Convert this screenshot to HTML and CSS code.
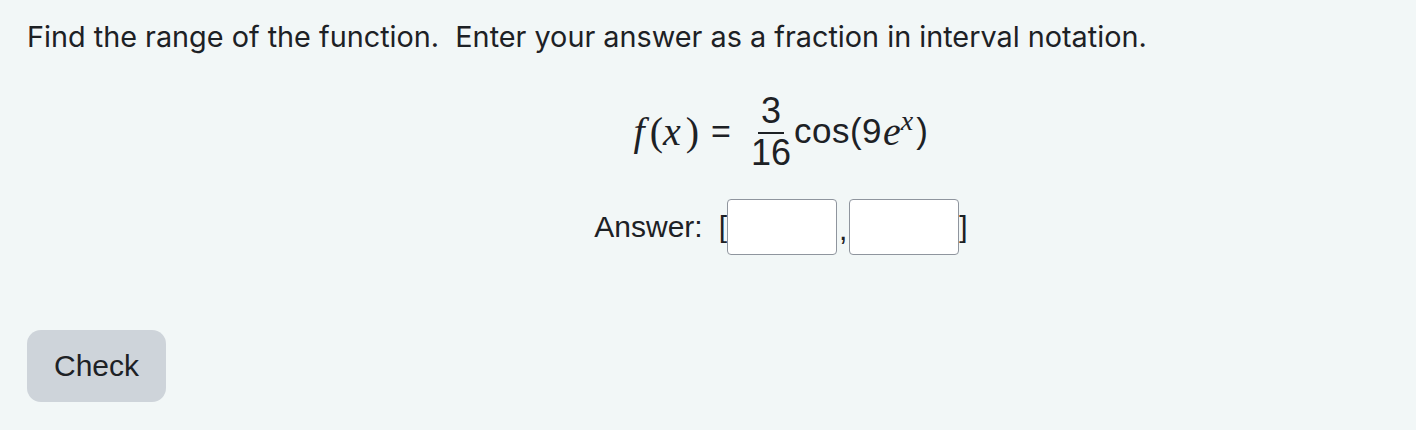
FILE: index.html
```html
<!DOCTYPE html>
<html lang="en">
<head>
  <meta charset="UTF-8" />
  <title>Range of a function</title>
  <link rel="stylesheet" href="styles.css">
</head>
<body>

  <div class="question">
    <p class="prompt">Find the range of the function.&nbsp; Enter your answer as a fraction in interval notation.</p>

    <div class="centered formula">
      <span class="mi">f</span><span class="mo">(</span><span class="mi">x</span><span class="mo">)</span>
      <span class="eq">=</span>
      <span class="frac">
        <span class="num">3</span>
        <span class="den">16</span>
      </span>
      <span class="sans">cos(9</span><span class="mi e">e</span><sup class="mi">x</sup><span class="sans">)</span>
    </div>

    <div class="centered answer">
      <span class="label">Answer:</span>
      <span class="bracket">[</span><input class="box" type="text"><span class="comma">,</span><input class="box" type="text"><span class="bracket">]</span>
    </div>

    <button class="check">Check</button>
  </div>

</body>
</html>
```

FILE: styles.css
```css
body {
  margin: 0;
  background: #f2f7f7;
  color: #1d2125;
  font-family: "Liberation Sans", Arial, sans-serif;
}

.question {
  padding: 16px 27px;
}

.prompt {
  margin: 0;
  font-family: Inter, "Liberation Sans", sans-serif;
  font-size: 28.8px;
  line-height: 42px;
}

.centered {
  margin-left: 146px;
  display: flex;
  justify-content: center;
  align-items: center;
}

.formula {
  margin-top: 31px;
  font-size: 35px;
  height: 84px;
}

.sans {
  letter-spacing: 0.5px;
}

.mi, .mo {
  font-family: "Liberation Serif", "Times New Roman", serif;
  font-size: 40px;
}

.mi {
  font-style: italic;
}

.mi + .mo {
  margin-left: 5px;
}

.eq {
  margin: 0 20px 0 12px;
  font-size: 34px;
}

.frac {
  display: inline-flex;
  flex-direction: column;
  align-items: center;
  margin-right: 3px;
  font-size: 36px;
}

.num {
  line-height: 42px;
  padding: 0 3px;
  border-bottom: 2px solid #1d2125;
}

.den {
  line-height: 38px;
}

.e {
  margin-left: 1px;
}

sup.mi {
  font-size: 28px;
  position: relative;
  top: -10px;
  margin-right: 3px;
}

.answer {
  margin-top: 26px;
  font-size: 30px;
}

.label {
  margin-right: 16px;
}

.bracket {
  font-size: 30px;
}

.box {
  width: 110px;
  height: 56px;
  box-sizing: border-box;
  border: 1.5px solid #8f959e;
  border-radius: 4px;
  background: #fff;
  margin: 0;
}

.comma {
  align-self: flex-end;
  margin: 0 2px 8px;
}

.check {
  margin-top: 75px;
  width: 139px;
  height: 72px;
  border: 0;
  border-radius: 14px;
  background: #ced4da;
  color: #1d2125;
  font-family: "Liberation Sans", Arial, sans-serif;
  font-size: 30px;
}
```
